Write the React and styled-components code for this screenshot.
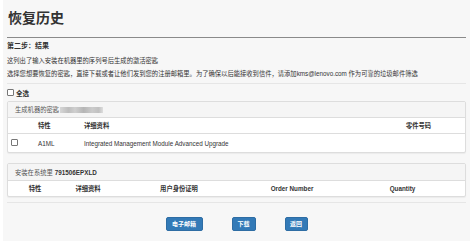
import React from 'react'
import styled, { createGlobalStyle } from 'styled-components'

const GlobalStyle = createGlobalStyle`
  body {
    margin: 0;
    background: #ffffff;
    font-family: "Liberation Sans", "Noto Sans CJK SC", sans-serif;
    color: #333333;
  }
`

const Page = styled.div`
  width: 467px;
  height: 241px;
  margin-left: 3px;
  padding: 9px 4px 0 4px;
  box-sizing: border-box;
  background: #f7f7f7;
`

const Title = styled.h1`
  margin: 0 0 0 1px;
  font-size: 14px;
  line-height: 18px;
  font-weight: bold;
  color: #333333;
`

const Rule = styled.div`
  margin-top: ${p => p.top}px;
  border-top: 1px solid ${p => p.color};
`

const Step = styled.h4`
  margin: 3px 0 0 0;
  font-size: 7px;
  line-height: 9px;
  font-weight: bold;
`

const Text = styled.p`
  margin: ${p => p.top}px 0 0 0;
  font-size: 6.3px;
  line-height: 9px;
  white-space: nowrap;
`

const CheckLabel = styled.label`
  display: flex;
  align-items: center;
  gap: 2px;
  margin-top: 4px;
  height: 9px;
  font-size: 6.5px;
  font-weight: bold;
`

const Box = styled.span`
  display: inline-block;
  width: 5px;
  height: 5px;
  border: 1px solid #777777;
  border-radius: 1px;
  background: #ffffff;
`

const Panel = styled.div`
  margin-top: ${p => p.top}px;
  border: 1px solid #dddddd;
  border-radius: 2px;
  background: #ffffff;
  box-shadow: 0 1px 1px rgba(0, 0, 0, 0.05);
  overflow: hidden;
`

const PanelHeading = styled.div`
  display: flex;
  align-items: center;
  height: ${p => p.h}px;
  padding-left: 7px;
  background: #f5f5f5;
  border-bottom: 1px solid #dddddd;
  font-size: 6.3px;
  color: #555555;

  b {
    color: #333333;
    margin-left: 2px;
  }
`

const Redacted = styled.span`
  display: inline-block;
  width: 43px;
  height: 6px;
  margin-left: 1px;
  background: linear-gradient(90deg, #d6d6d6 0%, #bdbdbd 20%, #cfcfcf 35%, #b5b5b5 55%, #cbcbcb 75%, #c0c0c0 90%, #dedede 100%);
  filter: blur(0.6px);
`

const Row = styled.div`
  display: grid;
  grid-template-columns: ${p => p.cols};
  align-items: center;
  height: ${p => p.h}px;
  font-size: 6.3px;
  font-weight: ${p => (p.head ? 'bold' : 'normal')};
  border-top: ${p => (p.divider ? '1px solid #dddddd' : 'none')};
`

const Cell = styled.div`
  padding-left: ${p => p.pad || 0}px;
  text-align: ${p => p.align || 'left'};
  white-space: nowrap;
`

const Buttons = styled.div`
  display: flex;
  justify-content: center;
  gap: 29px;
  margin-top: 14px;
`

const Button = styled.button`
  width: ${p => p.w}px;
  height: 14px;
  padding: 0;
  border: 1px solid #2e6da4;
  border-radius: 2px;
  background: #337ab7;
  color: #ffffff;
  font-family: "Liberation Sans", "Noto Sans CJK SC", sans-serif;
  font-size: 6px;
  font-weight: bold;
  line-height: 12px;
`

const keyCols = '23px 46px 1fr 93px'
const sysCols = '54px 52px 130px 96px 1fr'

export default function App() {
  return (
    <>
      <GlobalStyle />
      <Page>
        <Title>恢复历史</Title>
        <Rule top={10} color="#8a8a8a" />
        <Step>第二步：结果</Step>
        <Text top={6}>这列出了输入安装在机器里的序列号后生成的激活密匙</Text>
        <Text top={4}>选择您想要恢复的密匙，直接下载或者让他们发到您的注册邮箱里。为了确保以后能接收到信件，请添加kms@lenovo.com 作为可靠的垃圾邮件筛选</Text>
        <Rule top={5} color="#e6e6e6" />
        <CheckLabel><Box />全选</CheckLabel>

        <Panel top={4}>
          <PanelHeading h={15}>生成机器的密匙<Redacted /></PanelHeading>
          <Row cols={keyCols} h={15} head>
            <Cell />
            <Cell pad={7}>特性</Cell>
            <Cell pad={7}>详细资料</Cell>
            <Cell align="center">零件号码</Cell>
          </Row>
          <Row cols={keyCols} h={18} divider>
            <Cell pad={3}><Box /></Cell>
            <Cell pad={7}>A1ML</Cell>
            <Cell pad={7}>Integrated Management Module Advanced Upgrade</Cell>
            <Cell />
          </Row>
        </Panel>

        <Panel top={10}>
          <PanelHeading h={16}>安装在系统里<b>791506EPXLD</b></PanelHeading>
          <Row cols={sysCols} h={15} head>
            <Cell align="center">特性</Cell>
            <Cell align="center">详细资料</Cell>
            <Cell align="center">用户身份证明</Cell>
            <Cell align="center">Order Number</Cell>
            <Cell align="center">Quantity</Cell>
          </Row>
        </Panel>

        <Rule top={5} color="#e6e6e6" />
        <Buttons>
          <Button w={37}>电子邮箱</Button>
          <Button w={24}>下载</Button>
          <Button w={23}>返回</Button>
        </Buttons>
      </Page>
    </>
  )
}
